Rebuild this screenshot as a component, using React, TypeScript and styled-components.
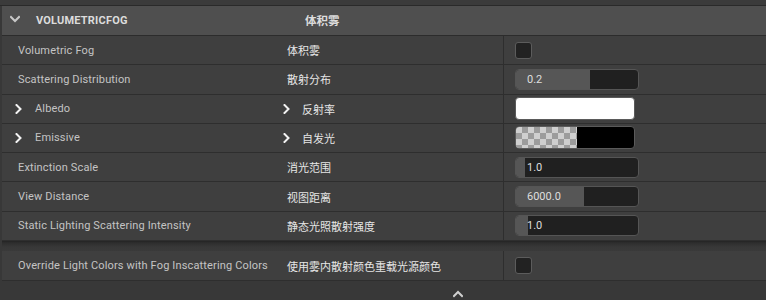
import React from 'react';
import styled, { createGlobalStyle } from 'styled-components';

const GlobalStyle = createGlobalStyle`
  body {
    margin: 0;
    background: #383838;
    font-family: Roboto, "Noto Sans", "Noto Sans CJK SC", sans-serif;
  }
`;

const Panel = styled.div`
  width: 766px;
  height: 300px;
  overflow: hidden;
  background: #383838;
  display: flex;
  flex-direction: column;
`;

const TopStrip = styled.div`
  height: 5px;
  background: #3b3b3b;
  border-bottom: 1px solid #2a2a2a;
`;

const Body = styled.div`
  margin-left: 2px;
  display: flex;
  flex-direction: column;
`;

const Header = styled.div`
  height: 29px;
  background: #4f4f4f;
  border-bottom: 1px solid #2c2c2c;
  display: grid;
  grid-template-columns: 277px 224px 1fr;
  align-items: center;
  font-size: 11px;
  font-weight: bold;
  color: #dcdcdc;
`;

const HeaderName = styled.div`
  display: flex;
  align-items: center;
  padding-left: 8px;
  gap: 16px;
  letter-spacing: 0.2px;
`;

const HeaderCn = styled.div`
  padding-left: 26px;
  font-size: 11.5px;
`;

const Row = styled.div<{ $h?: number }>`
  height: ${(p) => p.$h ?? 29.3}px;
  box-sizing: border-box;
  background: #3f3f3f;
  border-bottom: 1px solid #2e2e2e;
  display: grid;
  grid-template-columns: 277px 224px 1fr;
  align-items: stretch;
  font-size: 11px;
`;

const Label = styled.div<{ $arrow?: boolean }>`
  display: flex;
  align-items: center;
  gap: 11px;
  padding-left: ${(p) => (p.$arrow ? 12 : 16)}px;
  color: #c4c4c4;
  letter-spacing: 0.15px;
`;

const CnLabel = styled.div<{ $arrow?: boolean }>`
  display: flex;
  align-items: center;
  gap: 10px;
  padding-left: ${(p) => (p.$arrow ? 3 : 8)}px;
  color: #e6e6e6;
  font-size: 11px;
  white-space: nowrap;
`;

const ValueCell = styled.div`
  border-left: 1px solid #2e2e2e;
  display: flex;
  align-items: center;
  padding-left: 11px;
`;

const Checkbox = styled.div`
  width: 17px;
  height: 17px;
  box-sizing: border-box;
  background: #222222;
  border: 1px solid #5c5c5c;
  border-radius: 3px;
`;

const Slider = styled.div`
  position: relative;
  width: 124px;
  height: 21px;
  box-sizing: border-box;
  background: #202020;
  border: 1px solid #555555;
  border-radius: 4px;
  overflow: hidden;
  display: flex;
  align-items: center;
`;

const SliderFill = styled.div`
  position: absolute;
  left: 0;
  top: 0;
  bottom: 0;
  background: #565656;
`;

const SliderText = styled.span`
  position: relative;
  padding-left: 11px;
  color: #dedede;
  font-size: 11px;
`;

const ColorBox = styled.div<{ $kind: 'white' | 'alpha' }>`
  width: 120px;
  height: 23px;
  box-sizing: border-box;
  border: 1px solid #5a5a5a;
  border-radius: 4px;
  overflow: hidden;
  display: flex;
  background: ${(p) => (p.$kind === 'white' ? '#ffffff' : '#000000')};
`;

const Checker = styled.div`
  width: 61px;
  height: 100%;
  background-color: #cfcfcf;
  background-image:
    linear-gradient(45deg, #9c9c9c 25%, transparent 25%, transparent 75%, #9c9c9c 75%),
    linear-gradient(45deg, #9c9c9c 25%, transparent 25%, transparent 75%, #9c9c9c 75%);
  background-size: 12px 12px;
  background-position: 0 0, 6px 6px;
`;

const Gap = styled.div`
  height: 10px;
  background: linear-gradient(#232323 0px, #2e2e2e 2px, #383838 6px, #3a3a3a 10px);
`;

const Footer = styled.div`
  flex: 1;
  display: flex;
  justify-content: flex-start;
  padding-left: 453px;
  padding-top: 9px;
`;

const Chevron = ({ dir, color = '#e0e0e0' }: { dir: 'down' | 'right' | 'up'; color?: string }) => {
  const d =
    dir === 'down' ? 'M1 2 L5 6 L9 2' : dir === 'up' ? 'M1 6 L5 2 L9 6' : 'M2.5 1 L6.5 5 L2.5 9';
  return (
    <svg width="10" height="10" viewBox="0 0 10 10">
      <path d={d} fill="none" stroke={color} strokeWidth="2" strokeLinecap="square" strokeLinejoin="miter" />
    </svg>
  );
};

type Value =
  | { type: 'check' }
  | { type: 'slider'; text: string; fill: number }
  | { type: 'color'; kind: 'white' | 'alpha' };

interface Prop {
  en: string;
  cn: string;
  arrow?: boolean;
  value: Value;
}

const props: Prop[] = [
  { en: 'Volumetric Fog', cn: '体积雾', value: { type: 'check' } },
  { en: 'Scattering Distribution', cn: '散射分布', value: { type: 'slider', text: '0.2', fill: 74 } },
  { en: 'Albedo', cn: '反射率', arrow: true, value: { type: 'color', kind: 'white' } },
  { en: 'Emissive', cn: '自发光', arrow: true, value: { type: 'color', kind: 'alpha' } },
  { en: 'Extinction Scale', cn: '消光范围', value: { type: 'slider', text: '1.0', fill: 9 } },
  { en: 'View Distance', cn: '视图距离', value: { type: 'slider', text: '6000.0', fill: 68 } },
  { en: 'Static Lighting Scattering Intensity', cn: '静态光照散射强度', value: { type: 'slider', text: '1.0', fill: 12 } },
];

const renderValue = (v: Value) => {
  if (v.type === 'check') return <Checkbox />;
  if (v.type === 'slider')
    return (
      <Slider>
        <SliderFill style={{ width: v.fill }} />
        <SliderText>{v.text}</SliderText>
      </Slider>
    );
  return <ColorBox $kind={v.kind}>{v.kind === 'alpha' && <Checker />}</ColorBox>;
};

const PropRow = ({ p, h }: { p: Prop; h?: number }) => (
  <Row $h={h}>
    <Label $arrow={p.arrow}>
      {p.arrow && <Chevron dir="right" color="#f2f2f2" />}
      {p.en}
    </Label>
    <CnLabel $arrow={p.arrow}>
      {p.arrow && <Chevron dir="right" color="#f2f2f2" />}
      {p.cn}
    </CnLabel>
    <ValueCell>{renderValue(p.value)}</ValueCell>
  </Row>
);

export default function App() {
  return (
    <>
      <GlobalStyle />
      <Panel>
        <TopStrip />
        <Body>
          <Header>
            <HeaderName>
              <Chevron dir="down" color="#c8c8c8" />
              VOLUMETRICFOG
            </HeaderName>
            <HeaderCn>体积雾</HeaderCn>
            <div />
          </Header>
          {props.map((p) => (
            <PropRow key={p.en} p={p} />
          ))}
          <Gap />
          <PropRow
            h={30}
            p={{ en: 'Override Light Colors with Fog Inscattering Colors', cn: '使用雾内散射颜色重载光源颜色', value: { type: 'check' } }}
          />
        </Body>
        <Footer>
          <Chevron dir="up" color="#d0d0d0" />
        </Footer>
      </Panel>
    </>
  );
}
